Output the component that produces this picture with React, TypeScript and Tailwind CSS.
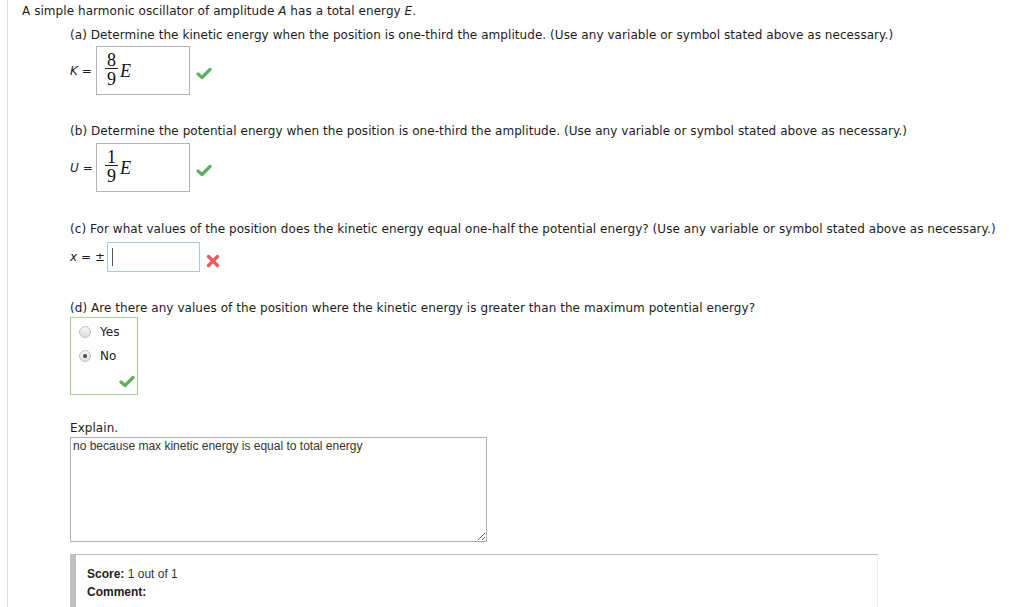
import React from "react"

function Check() {
  return (
    <svg width="16" height="13" viewBox="0 0 16 13" className="shrink-0">
      <path d="M2 7 L6 10.5 L14 2.5" fill="none" stroke="#5cb25c" strokeWidth="3.2" strokeLinecap="round" strokeLinejoin="round" />
    </svg>
  )
}

function Cross() {
  return (
    <svg width="14" height="14" viewBox="0 0 14 14" className="shrink-0">
      <path d="M2.5 2.5 L11.5 11.5 M11.5 2.5 L2.5 11.5" stroke="#ec5b5e" strokeWidth="3.4" strokeLinecap="round" />
    </svg>
  )
}

function Fraction({ num, den }: { num: string; den: string }) {
  return (
    <span className="inline-flex items-center font-['Liberation_Serif',serif] text-[#111]">
      <span className="inline-flex flex-col items-center">
        <span className="text-[18px] leading-[17px]">{num}</span>
        <span className="w-[13px] h-px bg-[#222] -mt-[1px] mb-[2px]" />
        <span className="text-[18px] leading-[17px]">{den}</span>
      </span>
      <span className="italic text-[18px] leading-none ml-[2px] mt-[2px]">E</span>
    </span>
  )
}

function AnswerRow({ label, num, den }: { label: string; num: string; den: string }) {
  return (
    <div className="flex items-center">
      <span className="w-[26px] text-[12px]">
        <i>{label}</i> =
      </span>
      <div className="w-[94px] h-[49px] border border-[#b4b4b4] pl-[8px] pb-[1px] flex items-center">
        <Fraction num={num} den={den} />
      </div>
      <span className="ml-[6px] mt-[5px]">
        <Check />
      </span>
    </div>
  )
}

function Radio({ checked, label }: { checked?: boolean; label: string }) {
  return (
    <div className="flex items-center h-[24px]">
      <span className="w-[12px] h-[12px] rounded-full border border-[#c2c2c2] bg-gradient-to-b from-[#f6f6f6] to-[#dedede] flex items-center justify-center">
        {checked && <span className="w-[4px] h-[4px] rounded-full bg-[#4a4a4a]" />}
      </span>
      <span className="ml-[9px]">{label}</span>
    </div>
  )
}

export default function App() {
  return (
    <div className="min-h-[607px] bg-white text-[#1c1c1c] font-['DejaVu_Sans',Verdana,sans-serif] text-[12px] leading-[16px] tracking-[0.06px]">
      <div className="ml-[7px] border-l border-[#dcdcdc] min-h-[607px] pl-[14px] pt-[3px]">
        <p>
          A simple harmonic oscillator of amplitude <i>A</i> has a total energy <i>E</i>.
        </p>

        <div className="pl-[48px]">
          <p className="mt-[8px]">
            (a) Determine the kinetic energy when the position is one-third the amplitude. (Use any variable or symbol stated above as necessary.)
          </p>
          <div className="mt-[3px]">
            <AnswerRow label="K" num="8" den="9" />
          </div>

          <p className="mt-[28px]">
            (b) Determine the potential energy when the position is one-third the amplitude. (Use any variable or symbol stated above as necessary.)
          </p>
          <div className="mt-[4px]">
            <AnswerRow label="U" num="1" den="9" />
          </div>

          <p className="mt-[29px]">
            (c) For what values of the position does the kinetic energy equal one-half the potential energy? (Use any variable or symbol stated above as necessary.)
          </p>
          <div className="mt-[5px] flex items-center">
            <span className="w-[37px]">
              <i>x</i> = ±
            </span>
            <div className="w-[93px] h-[30px] border border-[#a9c9e6] flex items-center pl-[4px]">
              <span className="w-px h-[18px] bg-[#555]" />
            </div>
            <span className="ml-[6px] mt-[8px]">
              <Cross />
            </span>
          </div>

          <p className="mt-[28px]">
            (d) Are there any values of the position where the kinetic energy is greater than the maximum potential energy?
          </p>
          <div className="mt-[1px] w-[68px] h-[78px] border border-[#a6d48f] pl-[8px] pt-[2px] flex flex-col">
            <Radio label="Yes" />
            <Radio label="No" checked />
            <div className="flex justify-end pr-[2px] mt-[7px]">
              <Check />
            </div>
          </div>

          <p className="mt-[25px]">Explain.</p>
          <textarea
            readOnly
            defaultValue="no because max kinetic energy is equal to total energy"
            className="mt-[1px] block w-[417px] h-[105px] border border-[#b0b0b0] px-[2px] py-[1px] font-['Liberation_Sans',Arial,sans-serif] text-[12px] leading-[15px] tracking-normal text-[#333] outline-none resize-y"
          />

          <div className="mt-[12px] w-[808px] h-[60px] border-l-[6px] border-l-[#c0c0c0] border-t border-t-[#bcbcbc] border-r border-r-[#ececec] pl-[11px] pt-[10px] font-['Liberation_Sans',Arial,sans-serif] text-[12px] leading-[18px] tracking-normal text-[#333]">
            <p>
              <b className="text-[#222]">Score:</b> 1 out of 1
            </p>
            <p>
              <b className="text-[#222]">Comment:</b>
            </p>
          </div>
        </div>
      </div>
    </div>
  )
}
